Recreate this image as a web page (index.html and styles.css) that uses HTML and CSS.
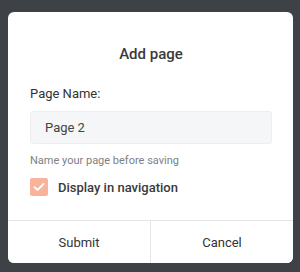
FILE: index.html
```html
<!DOCTYPE html>
<html lang="en">
<head>
    <meta charset="UTF-8">
    <title>Add page</title>
    <link rel="stylesheet" href="styles.css">
</head>
<body>
    <div class="overlay">
        <div class="modal">
            <div class="modal-body">
                <h2 class="modal-title">Add page</h2>
                <label class="field-label" for="pageName">Page Name:</label>
                <input class="field-input" id="pageName" type="text" value="Page 2">
                <p class="field-hint">Name your page before saving</p>
                <label class="check-row">
                    <span class="check-box">
                        <svg width="12" height="10" viewBox="0 0 12 10">
                            <path d="M1.5 5.2 L4.5 8 L10.5 2" fill="none" stroke="#fff" stroke-width="1.8" stroke-linecap="round" stroke-linejoin="round"/>
                        </svg>
                    </span>
                    <span class="check-text">Display in navigation</span>
                </label>
            </div>
            <div class="modal-actions">
                <button class="action-btn">Submit</button>
                <button class="action-btn">Cancel</button>
            </div>
        </div>
    </div>
</body>
</html>
```

FILE: styles.css
```css
* {
    margin: 0;
    padding: 0;
    box-sizing: border-box;
    font-family: Roboto, 'Liberation Sans', sans-serif;
}

body {
    background: #3e4246;
    width: 300px;
    height: 272px;
    overflow: hidden;
}

.overlay {
    padding: 12px 7px 0 8px;
}

.modal {
    background: #fff;
    border-radius: 6px;
    height: 251px;
    display: flex;
    flex-direction: column;
    overflow: hidden;
}

.modal-body {
    flex: 1;
    padding: 33px 21px 0 22px;
}

.modal-title {
    text-align: center;
    font-size: 15px;
    font-weight: 500;
    color: #3a3a3a;
    margin-bottom: 23px;
}

.field-label {
    display: block;
    font-size: 13px;
    font-weight: 400;
    color: #333;
    margin-bottom: 10px;
}

.field-input {
    display: block;
    width: 100%;
    height: 33px;
    background: #f5f6f7;
    border: 1px solid #eceeef;
    border-radius: 3px;
    padding: 0 14px;
    font-size: 13px;
    color: #444;
    outline: none;
}

.field-hint {
    font-size: 11px;
    color: #7d8084;
    margin-top: 10px;
}

.check-row {
    display: flex;
    align-items: center;
    margin-top: 11px;
}

.check-box {
    width: 18px;
    height: 18px;
    border-radius: 2px;
    background: #f9b39b;
    display: flex;
    align-items: center;
    justify-content: center;
}

.check-text {
    margin-left: 10px;
    font-size: 13px;
    font-weight: 500;
    color: #3a3a3a;
}

.modal-actions {
    display: flex;
    height: 43px;
    border-top: 1px solid #e3e5e7;
}

.action-btn {
    flex: 1;
    background: #fff;
    border: none;
    font-size: 13px;
    color: #333;
}

.action-btn + .action-btn {
    border-left: 1px solid #e3e5e7;
}
```
